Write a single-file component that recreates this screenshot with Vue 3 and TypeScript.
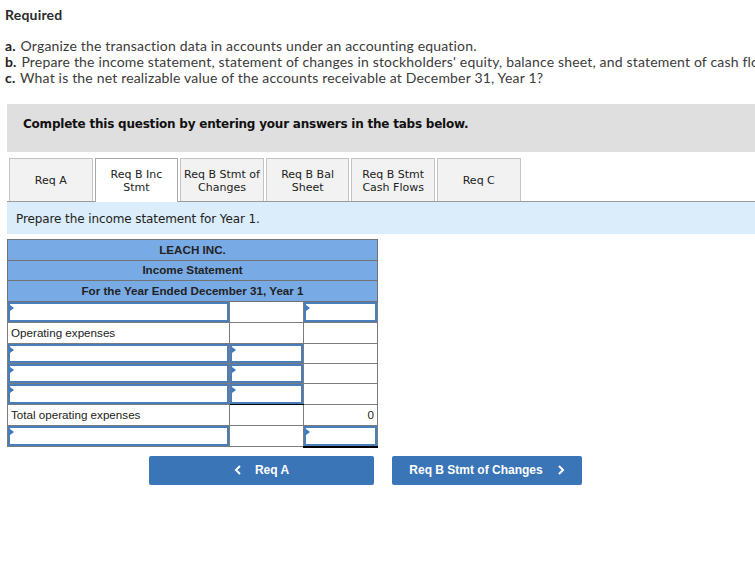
<template>
  <div class="page">
    <h4 class="req-title">Required</h4>
    <div class="req-list">
      <p v-for="item in requirements" :key="item.label"><b>{{ item.label }}</b> {{ item.text }}</p>
    </div>

    <div class="banner">Complete this question by entering your answers in the tabs below.</div>

    <div class="tabs">
      <button
        v-for="tab in tabs"
        :key="tab"
        class="tab"
        :class="{ active: tab === activeTab }"
        @click="activeTab = tab"
      >{{ tab }}</button>
    </div>
    <div class="prompt">Prepare the income statement for Year 1.</div>

    <table class="sheet">
      <colgroup>
        <col class="col-a" />
        <col class="col-b" />
        <col class="col-c" />
      </colgroup>
      <thead>
        <tr><th colspan="3" class="h1">LEACH INC.</th></tr>
        <tr><th colspan="3" class="h2">Income Statement</th></tr>
        <tr><th colspan="3" class="h3">For the Year Ended December 31, Year 1</th></tr>
      </thead>
      <tbody>
        <tr v-for="(row, i) in rows" :key="i" :style="{ height: row.h + 'px' }">
          <td v-for="(cell, j) in row.cells" :key="j" :class="cell.cls">
            <div v-if="cell.input" class="input"><span class="flag"></span></div>
            <template v-else>{{ cell.text }}</template>
          </td>
        </tr>
      </tbody>
    </table>

    <div class="nav">
      <button class="nav-btn prev">
        <svg width="8" height="10" viewBox="0 0 8 10"><path d="M6 1 2 5l4 4" fill="none" stroke="#fff" stroke-width="2" /></svg>
        <span>Req A</span>
      </button>
      <button class="nav-btn next">
        <span>Req B Stmt of Changes</span>
        <svg width="8" height="10" viewBox="0 0 8 10"><path d="M2 1l4 4-4 4" fill="none" stroke="#fff" stroke-width="2" /></svg>
      </button>
    </div>
  </div>
</template>

<script setup lang="ts">
import { ref } from 'vue'

interface Cell { text?: string; input?: boolean; cls?: string }

const requirements = [
  { label: 'a.', text: 'Organize the transaction data in accounts under an accounting equation.' },
  { label: 'b.', text: "Prepare the income statement, statement of changes in stockholders' equity, balance sheet, and statement of cash flows." },
  { label: 'c.', text: 'What is the net realizable value of the accounts receivable at December 31, Year 1?' }
]

const tabs = ['Req A', 'Req B Inc Stmt', 'Req B Stmt of Changes', 'Req B Bal Sheet', 'Req B Stmt Cash Flows', 'Req C']
const activeTab = ref('Req B Inc Stmt')

const inp: Cell = { input: true }
const blank: Cell = {}

const rows: { h: number; cells: Cell[] }[] = [
  { h: 21, cells: [inp, blank, inp] },
  { h: 21, cells: [{ text: 'Operating expenses' }, blank, blank] },
  { h: 20, cells: [inp, inp, blank] },
  { h: 20, cells: [inp, inp, blank] },
  { h: 21, cells: [inp, { input: true, cls: 'under' }, blank] },
  { h: 21, cells: [{ text: 'Total operating expenses' }, blank, { text: '0', cls: 'num' }] },
  { h: 21, cells: [inp, blank, { input: true, cls: 'total' }] }
]
</script>

<style scoped>
.page {
  width: 755px;
  height: 567px;
  overflow: hidden;
  background: #fff;
  font-family: Lato, "Open Sans", sans-serif;
  color: #2b2b2b;
}
.req-title {
  margin: 0;
  padding: 7px 0 0 5px;
  height: 38px;
  box-sizing: border-box;
  font-size: 14px;
  line-height: 16px;
  font-weight: 700;
  letter-spacing: 0.2px;
}
.req-list {
  padding-left: 5px;
  height: 66px;
  white-space: nowrap;
  overflow: hidden;
}
.req-list p {
  margin: 0;
  font-size: 14px;
  line-height: 16px;
  letter-spacing: 0.18px;
  color: #3b3b3b;
}
.req-list b {
  color: #222;
  margin-right: 1px;
}
.banner {
  margin-left: 7px;
  height: 48px;
  padding-left: 16px;
  background: #dfdfdf;
  font-family: "DejaVu Sans", Verdana, sans-serif;
  font-size: 12px;
  font-weight: 700;
  letter-spacing: -0.22px;
  line-height: 40px;
  color: #111;
}
.tabs {
  display: flex;
  gap: 2px;
  margin: 6px 0 0 9px;
  height: 43px;
}
.tab {
  width: 83.6px;
  padding: 1px 1px 0;
  background: #f2f2f2;
  border: 1px solid #c4c4c4;
  border-bottom: none;
  font-family: "DejaVu Sans", Verdana, sans-serif;
  font-size: 11px;
  line-height: 13px;
  color: #222;
}
.tab.active {
  background: #fff;
  border-color: #a8a8a8;
  height: 44px;
  position: relative;
  z-index: 1;
}
.prompt {
  margin-left: 7px;
  height: 33px;
  padding-left: 9px;
  background: #dbecfa;
  border-top: 1px solid #9a9a9a;
  box-sizing: border-box;
  font-family: "DejaVu Sans", Verdana, sans-serif;
  font-size: 12px;
  letter-spacing: -0.1px;
  line-height: 34px;
  color: #222;
}
.sheet {
  margin: 5px 0 0 7px;
  width: 371px;
  table-layout: fixed;
  border-collapse: collapse;
  font-family: "Liberation Sans", Arial, sans-serif;
  font-size: 11.65px;
  color: #222;
}
.col-a { width: 222px; }
.col-b { width: 74px; }
.col-c { width: 74px; }
.sheet {
  width: 370px;
}
.sheet th {
  box-sizing: border-box;
  background: #78abe5;
  border: 1px solid #727272;
  padding: 0 0 2px;
  font-weight: 700;
  color: #222;
  line-height: 13px;
}
.h1 { height: 21px; }
.h2 { height: 20px; }
.h3 { height: 21px; }
.sheet td {
  box-sizing: border-box;
  border: 1px solid #7c7c7c;
  padding: 0 0 2px 3px;
  line-height: 13px;
}
.sheet td:has(.input) {
  padding: 0;
  position: relative;
}
.input {
  position: absolute;
  inset: 0;
  border: 2px solid #4a7ebb;
  background: #fff;
}
.flag {
  position: absolute;
  left: 0;
  top: 1px;
  border-left: 4px solid #3f78c0;
  border-top: 3px solid transparent;
  border-bottom: 3px solid transparent;
}
.sheet td.num {
  text-align: right;
  padding-right: 3px;
}
.sheet td.under {
  border-bottom: 1px solid #000;
}
.sheet td.total {
  border-top: 1px solid #000;
  border-bottom: 2px solid #000;
}
.nav {
  display: flex;
  gap: 18px;
  margin: 8px 0 0 149px;
}
.nav-btn {
  height: 29px;
  display: flex;
  align-items: center;
  justify-content: center;
  background: #3a75b7;
  border: none;
  border-radius: 2px;
  color: #fff;
  font-family: "Liberation Sans", Arial, sans-serif;
  font-size: 12px;
  font-weight: 700;
}
.prev {
  width: 225px;
  gap: 13px;
}
.next {
  width: 190px;
  gap: 14px;
}
</style>

<style>
html, body {
  margin: 0;
  background: #fff;
}
</style>
